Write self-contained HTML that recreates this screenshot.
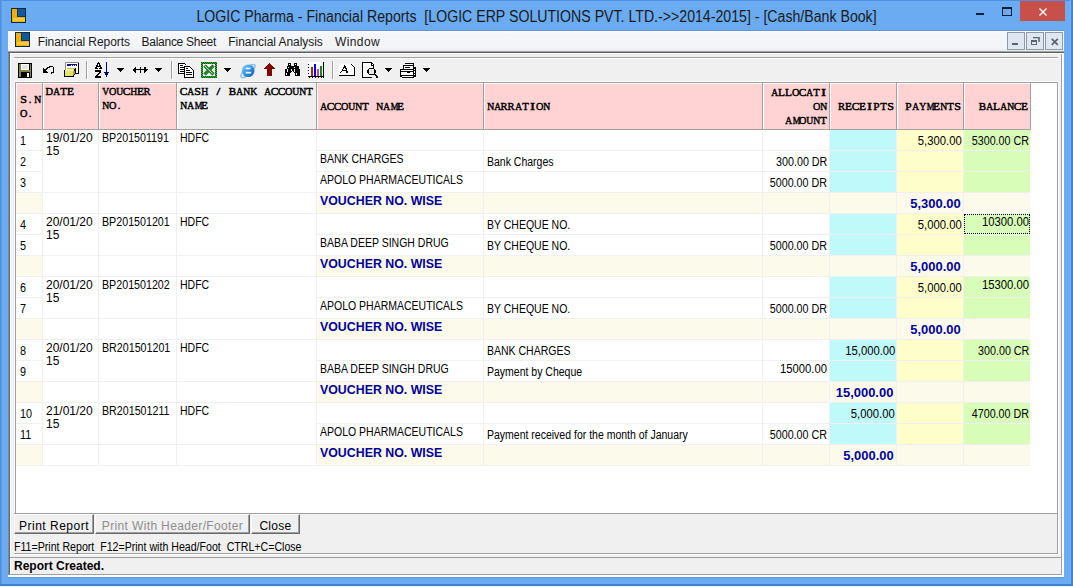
<!DOCTYPE html><html><head><meta charset="utf-8"><style>*{margin:0;padding:0;box-sizing:border-box}html,body{width:1073px;height:587px;overflow:hidden}body{position:relative;font-family:"Liberation Sans",sans-serif;color:#000;background:#6aabf2}.a{position:absolute;display:block}.t{position:absolute;white-space:pre;line-height:20px}.h{position:absolute;white-space:pre;line-height:20px;font-family:"Liberation Serif",serif;font-size:10.5px;font-weight:400;color:#000;-webkit-text-stroke:0.45px #000}.h i{font-style:normal;display:inline-block;width:7px;text-align:center}</style></head><body><div class="a" style="left:0px;top:0px;width:1073px;height:587px;background:#6aabf2"></div><div class="a" style="left:0px;top:0px;width:1073px;height:1px;background:#4d8ede"></div><div class="a" style="left:0px;top:0px;width:1px;height:587px;background:#4d8ede"></div><div class="a" style="left:1px;top:0px;width:1px;height:587px;background:#5e9be8"></div><div class="a" style="left:1070px;top:0px;width:1px;height:587px;background:#78b4f4"></div><div class="a" style="left:1071px;top:0px;width:2px;height:587px;background:#3f86d2"></div><div class="a" style="left:0px;top:584px;width:1073px;height:2px;background:#3f86d2"></div><div class="a" style="left:0px;top:586px;width:1073px;height:1px;background:#e8f2fc"></div><div class="a" style="left:8px;top:577px;width:1056px;height:1px;background:#5f95d8"></div><svg class="a" style="left:11px;top:8px" width="16" height="16" viewBox="0 0 16 16" shape-rendering="crispEdges"><rect x="0" y="0" width="15" height="15" fill="#0a2744"/><rect x="1" y="1" width="13" height="13" fill="#115a9a"/><rect x="1" y="1" width="5" height="13" fill="#efb000"/><rect x="1" y="9" width="13" height="5" fill="#efb000"/><rect x="6" y="1" width="1" height="8" fill="#0b3560"/><rect x="6" y="8" width="8" height="1" fill="#0b3560"/><rect x="2" y="10" width="12" height="3" fill="#f5c93a"/></svg><div class="t" style="left:0;width:1073px;text-align:center;top:7px;font-size:16px;color:#1a1a1a;transform:scaleX(0.884);transform-origin:center top;">LOGIC Pharma - Financial Reports  [LOGIC ERP SOLUTIONS PVT. LTD.-&gt;&gt;2014-2015] - [Cash/Bank Book]</div><div class="a" style="left:976px;top:13px;width:8px;height:2px;background:#0b1e3c"></div><div class="a" style="left:1002px;top:7px;width:10px;height:9px;border:1px solid #0b1e3c;border-top-width:2px"></div><div class="a" style="left:1020px;top:1px;width:45px;height:20px;background:#c7504b"></div><svg class="a" style="left:1039px;top:8px" width="8" height="8" viewBox="0 0 8 8" shape-rendering="crispEdges"><path d="M0.5 0.5 L7.5 7.5 M7.5 0.5 L0.5 7.5" stroke="#fff" stroke-width="1.35" shape-rendering="geometricPrecision"/></svg><div class="a" style="left:8px;top:30px;width:1056px;height:1px;background:#5f93d6"></div><div class="a" style="left:8px;top:31px;width:1056px;height:21px;background:linear-gradient(#ffffff 0px,#f5f6f9 2px,#f4f5f8 17px,#e9eaee 20px)"></div><div class="a" style="left:8px;top:51px;width:1056px;height:1px;background:#a4a4a4"></div><div class="a" style="left:8px;top:52px;width:1056px;height:1px;background:#606060"></div><svg class="a" style="left:15px;top:32px" width="16" height="16" viewBox="0 0 16 16" shape-rendering="crispEdges"><rect x="0" y="0" width="15" height="15" fill="#0a2744"/><rect x="1" y="1" width="13" height="13" fill="#115a9a"/><rect x="1" y="1" width="5" height="13" fill="#efb000"/><rect x="1" y="9" width="13" height="5" fill="#efb000"/><rect x="6" y="1" width="1" height="8" fill="#0b3560"/><rect x="6" y="8" width="8" height="1" fill="#0b3560"/><rect x="2" y="10" width="12" height="3" fill="#f5c93a"/></svg><div class="t" style="left:37.7px;top:32px;font-size:12px;color:#1a1a1a;letter-spacing:-0.07px;">Financial Reports</div><div class="t" style="left:141.6px;top:32px;font-size:12px;color:#1a1a1a;letter-spacing:-0.28px;">Balance Sheet</div><div class="t" style="left:228.3px;top:32px;font-size:12px;color:#1a1a1a;letter-spacing:-0.05px;">Financial Analysis</div><div class="t" style="left:335px;top:32px;font-size:12px;color:#1a1a1a;letter-spacing:0.4px;">Window</div><div class="a" style="left:1007px;top:32px;width:18px;height:18px;border:1px solid #8c9aa8;background:#dfe8f2"></div><div class="a" style="left:1026px;top:32px;width:18px;height:18px;border:1px solid #8c9aa8;background:#dfe8f2"></div><div class="a" style="left:1045px;top:32px;width:18px;height:18px;border:1px solid #8c9aa8;background:#dfe8f2"></div><div class="a" style="left:1012px;top:43px;width:6px;height:2px;background:#5a6570"></div><div class="a" style="left:1031px;top:40px;width:6px;height:5px;border:1px solid #5a6570;border-top-width:2px"></div><svg class="a" style="left:1033px;top:37px" width="7" height="6" viewBox="0 0 7 6" shape-rendering="crispEdges"><path d="M0 0.5 H6 V5" stroke="#5a6570" stroke-width="1.5" fill="none" shape-rendering="geometricPrecision"/></svg><svg class="a" style="left:1051px;top:38px" width="8" height="8" viewBox="0 0 8 8" shape-rendering="crispEdges"><path d="M0.8 0.8 L6.8 6.8 M6.8 0.8 L0.8 6.8" stroke="#5a6570" stroke-width="1.8" shape-rendering="geometricPrecision"/></svg><div class="a" style="left:8px;top:53px;width:1056px;height:524px;background:#f0f0f0"></div><div class="a" style="left:8px;top:53px;width:1056px;height:1px;background:#ffffff"></div><div class="a" style="left:8px;top:53px;width:1px;height:524px;background:#7a8aa0"></div><div class="a" style="left:9px;top:53px;width:1px;height:522px;background:#696969"></div><div class="a" style="left:10px;top:54px;width:1px;height:521px;background:#ffffff"></div><div class="a" style="left:1061px;top:54px;width:1px;height:521px;background:#a0a0a0"></div><div class="a" style="left:1062px;top:53px;width:2px;height:524px;background:#ffffff"></div><div class="a" style="left:8px;top:575px;width:1056px;height:2px;background:#ffffff"></div><div class="a" style="left:14px;top:57px;width:1044px;height:1px;background:#a0a0a0"></div><div class="a" style="left:14px;top:58px;width:1044px;height:1px;background:#ffffff"></div><div class="a" style="left:14px;top:81px;width:1045px;height:474px;background:#ffffff"></div><div class="a" style="left:15px;top:82px;width:1043px;height:472px;background:#a0a0a0"></div><div class="a" style="left:16px;top:83px;width:1041px;height:430px;background:#ffffff"></div><div class="a" style="left:16px;top:514px;width:1041px;height:39px;background:#f0f0f0"></div><div class="a" style="left:14px;top:513px;width:1043px;height:1px;background:#a0a0a0"></div><div class="a" style="left:15px;top:514px;width:1px;height:39px;background:#f0f0f0"></div><div class="a" style="left:14px;top:553px;width:1044px;height:1px;background:#a0a0a0"></div><div class="a" style="left:16px;top:83px;width:26px;height:46px;background:#ffffff"></div><div class="a" style="left:17px;top:84px;width:25px;height:45px;background:#ffd3d3"></div><div class="a" style="left:42px;top:83px;width:1px;height:47px;background:#a0a0a0"></div><div class="a" style="left:43px;top:83px;width:55px;height:46px;background:#ffffff"></div><div class="a" style="left:44px;top:84px;width:54px;height:45px;background:#ffd3d3"></div><div class="a" style="left:98px;top:83px;width:1px;height:47px;background:#a0a0a0"></div><div class="a" style="left:99px;top:83px;width:77px;height:46px;background:#ffffff"></div><div class="a" style="left:100px;top:84px;width:76px;height:45px;background:#ffd3d3"></div><div class="a" style="left:176px;top:83px;width:1px;height:47px;background:#a0a0a0"></div><div class="a" style="left:177px;top:83px;width:139px;height:46px;background:#ffffff"></div><div class="a" style="left:178px;top:84px;width:138px;height:45px;background:#efefef"></div><div class="a" style="left:316px;top:83px;width:1px;height:47px;background:#a0a0a0"></div><div class="a" style="left:317px;top:83px;width:166px;height:46px;background:#ffffff"></div><div class="a" style="left:318px;top:84px;width:165px;height:45px;background:#ffd3d3"></div><div class="a" style="left:483px;top:83px;width:1px;height:47px;background:#a0a0a0"></div><div class="a" style="left:484px;top:83px;width:278px;height:46px;background:#ffffff"></div><div class="a" style="left:485px;top:84px;width:277px;height:45px;background:#ffd3d3"></div><div class="a" style="left:762px;top:83px;width:1px;height:47px;background:#a0a0a0"></div><div class="a" style="left:763px;top:83px;width:66px;height:46px;background:#ffffff"></div><div class="a" style="left:764px;top:84px;width:65px;height:45px;background:#ffd3d3"></div><div class="a" style="left:829px;top:83px;width:1px;height:47px;background:#a0a0a0"></div><div class="a" style="left:830px;top:83px;width:66px;height:46px;background:#ffffff"></div><div class="a" style="left:831px;top:84px;width:65px;height:45px;background:#ffd3d3"></div><div class="a" style="left:896px;top:83px;width:1px;height:47px;background:#a0a0a0"></div><div class="a" style="left:897px;top:83px;width:66px;height:46px;background:#ffffff"></div><div class="a" style="left:898px;top:84px;width:65px;height:45px;background:#ffd3d3"></div><div class="a" style="left:963px;top:83px;width:1px;height:47px;background:#a0a0a0"></div><div class="a" style="left:964px;top:83px;width:66px;height:46px;background:#ffffff"></div><div class="a" style="left:965px;top:84px;width:65px;height:45px;background:#ffd3d3"></div><div class="a" style="left:1030px;top:83px;width:1px;height:47px;background:#a0a0a0"></div><div class="a" style="left:15px;top:129px;width:1016px;height:1px;background:#a0a0a0"></div><div class="h" style="left:19.5px;top:90px"><i style="transform:scaleX(1.15)">S</i><i style="transform:scaleX(1.0)">.</i><i style="transform:scaleX(0.92)">N</i></div><div class="h" style="left:19.5px;top:104px"><i style="transform:scaleX(0.98)">O</i><i style="transform:scaleX(1.0)">.</i></div><div class="h" style="left:45.5px;top:82px"><i style="transform:scaleX(1.0)">D</i><i style="transform:scaleX(0.9)">A</i><i style="transform:scaleX(1.02)">T</i><i style="transform:scaleX(1.08)">E</i></div><div class="h" style="left:101.5px;top:82px"><i style="transform:scaleX(0.9)">V</i><i style="transform:scaleX(0.98)">O</i><i style="transform:scaleX(0.92)">U</i><i style="transform:scaleX(1.08)">C</i><i style="transform:scaleX(0.92)">H</i><i style="transform:scaleX(1.08)">E</i><i style="transform:scaleX(1.0)">R</i></div><div class="h" style="left:101.5px;top:96px"><i style="transform:scaleX(0.92)">N</i><i style="transform:scaleX(0.98)">O</i><i style="transform:scaleX(1.0)">.</i></div><div class="h" style="left:179.5px;top:82px"><i style="transform:scaleX(1.08)">C</i><i style="transform:scaleX(0.9)">A</i><i style="transform:scaleX(1.15)">S</i><i style="transform:scaleX(0.92)">H</i><i style="transform:scaleX(1.0)"> </i><i style="transform:scaleX(1.3)">/</i><i style="transform:scaleX(1.0)"> </i><i style="transform:scaleX(1.05)">B</i><i style="transform:scaleX(0.9)">A</i><i style="transform:scaleX(0.92)">N</i><i style="transform:scaleX(0.92)">K</i><i style="transform:scaleX(1.0)"> </i><i style="transform:scaleX(0.9)">A</i><i style="transform:scaleX(1.08)">C</i><i style="transform:scaleX(1.08)">C</i><i style="transform:scaleX(0.98)">O</i><i style="transform:scaleX(0.92)">U</i><i style="transform:scaleX(0.92)">N</i><i style="transform:scaleX(1.02)">T</i></div><div class="h" style="left:179.5px;top:96px"><i style="transform:scaleX(0.92)">N</i><i style="transform:scaleX(0.9)">A</i><i style="transform:scaleX(0.82)">M</i><i style="transform:scaleX(1.08)">E</i></div><div class="h" style="left:319.5px;top:97px"><i style="transform:scaleX(0.9)">A</i><i style="transform:scaleX(1.08)">C</i><i style="transform:scaleX(1.08)">C</i><i style="transform:scaleX(0.98)">O</i><i style="transform:scaleX(0.92)">U</i><i style="transform:scaleX(0.92)">N</i><i style="transform:scaleX(1.02)">T</i><i style="transform:scaleX(1.0)"> </i><i style="transform:scaleX(0.92)">N</i><i style="transform:scaleX(0.9)">A</i><i style="transform:scaleX(0.82)">M</i><i style="transform:scaleX(1.08)">E</i></div><div class="h" style="left:486.5px;top:97px"><i style="transform:scaleX(0.92)">N</i><i style="transform:scaleX(0.9)">A</i><i style="transform:scaleX(1.0)">R</i><i style="transform:scaleX(1.0)">R</i><i style="transform:scaleX(0.9)">A</i><i style="transform:scaleX(1.02)">T</i><i style="transform:scaleX(1.45)">I</i><i style="transform:scaleX(0.98)">O</i><i style="transform:scaleX(0.92)">N</i></div><div class="h" style="left:771px;top:83px"><i style="transform:scaleX(0.9)">A</i><i style="transform:scaleX(1.08)">L</i><i style="transform:scaleX(1.08)">L</i><i style="transform:scaleX(0.98)">O</i><i style="transform:scaleX(1.08)">C</i><i style="transform:scaleX(0.9)">A</i><i style="transform:scaleX(1.02)">T</i><i style="transform:scaleX(1.45)">I</i></div><div class="h" style="left:813px;top:97px"><i style="transform:scaleX(0.98)">O</i><i style="transform:scaleX(0.92)">N</i></div><div class="h" style="left:785px;top:111px"><i style="transform:scaleX(0.9)">A</i><i style="transform:scaleX(0.82)">M</i><i style="transform:scaleX(0.98)">O</i><i style="transform:scaleX(0.92)">U</i><i style="transform:scaleX(0.92)">N</i><i style="transform:scaleX(1.02)">T</i></div><div class="h" style="left:838px;top:97px"><i style="transform:scaleX(1.0)">R</i><i style="transform:scaleX(1.08)">E</i><i style="transform:scaleX(1.08)">C</i><i style="transform:scaleX(1.08)">E</i><i style="transform:scaleX(1.45)">I</i><i style="transform:scaleX(1.08)">P</i><i style="transform:scaleX(1.02)">T</i><i style="transform:scaleX(1.15)">S</i></div><div class="h" style="left:905px;top:97px"><i style="transform:scaleX(1.08)">P</i><i style="transform:scaleX(0.9)">A</i><i style="transform:scaleX(0.92)">Y</i><i style="transform:scaleX(0.82)">M</i><i style="transform:scaleX(1.08)">E</i><i style="transform:scaleX(0.92)">N</i><i style="transform:scaleX(1.02)">T</i><i style="transform:scaleX(1.15)">S</i></div><div class="h" style="left:979px;top:97px"><i style="transform:scaleX(1.05)">B</i><i style="transform:scaleX(0.9)">A</i><i style="transform:scaleX(1.08)">L</i><i style="transform:scaleX(0.9)">A</i><i style="transform:scaleX(0.92)">N</i><i style="transform:scaleX(1.08)">C</i><i style="transform:scaleX(1.08)">E</i></div><div class="a" style="left:830px;top:130px;width:66px;height:20px;background:#bff9f9"></div><div class="a" style="left:897px;top:130px;width:66px;height:20px;background:#fefecb"></div><div class="a" style="left:964px;top:130px;width:66px;height:20px;background:#d8fdb8"></div><div class="a" style="left:830px;top:151px;width:66px;height:20px;background:#bff9f9"></div><div class="a" style="left:897px;top:151px;width:66px;height:20px;background:#fefecb"></div><div class="a" style="left:964px;top:151px;width:66px;height:20px;background:#d8fdb8"></div><div class="a" style="left:830px;top:172px;width:66px;height:20px;background:#bff9f9"></div><div class="a" style="left:897px;top:172px;width:66px;height:20px;background:#fefecb"></div><div class="a" style="left:964px;top:172px;width:66px;height:20px;background:#d8fdb8"></div><div class="a" style="left:16px;top:193px;width:26px;height:20px;background:#fcfbeb"></div><div class="a" style="left:317px;top:193px;width:713px;height:20px;background:#fcfbeb"></div><div class="a" style="left:830px;top:214px;width:66px;height:20px;background:#bff9f9"></div><div class="a" style="left:897px;top:214px;width:66px;height:20px;background:#fefecb"></div><div class="a" style="left:964px;top:214px;width:66px;height:20px;background:#d8fdb8"></div><div class="a" style="left:830px;top:235px;width:66px;height:20px;background:#bff9f9"></div><div class="a" style="left:897px;top:235px;width:66px;height:20px;background:#fefecb"></div><div class="a" style="left:964px;top:235px;width:66px;height:20px;background:#d8fdb8"></div><div class="a" style="left:16px;top:256px;width:26px;height:20px;background:#fcfbeb"></div><div class="a" style="left:317px;top:256px;width:713px;height:20px;background:#fcfbeb"></div><div class="a" style="left:830px;top:277px;width:66px;height:20px;background:#bff9f9"></div><div class="a" style="left:897px;top:277px;width:66px;height:20px;background:#fefecb"></div><div class="a" style="left:964px;top:277px;width:66px;height:20px;background:#d8fdb8"></div><div class="a" style="left:830px;top:298px;width:66px;height:20px;background:#bff9f9"></div><div class="a" style="left:897px;top:298px;width:66px;height:20px;background:#fefecb"></div><div class="a" style="left:964px;top:298px;width:66px;height:20px;background:#d8fdb8"></div><div class="a" style="left:16px;top:319px;width:26px;height:20px;background:#fcfbeb"></div><div class="a" style="left:317px;top:319px;width:713px;height:20px;background:#fcfbeb"></div><div class="a" style="left:830px;top:340px;width:66px;height:20px;background:#bff9f9"></div><div class="a" style="left:897px;top:340px;width:66px;height:20px;background:#fefecb"></div><div class="a" style="left:964px;top:340px;width:66px;height:20px;background:#d8fdb8"></div><div class="a" style="left:830px;top:361px;width:66px;height:20px;background:#bff9f9"></div><div class="a" style="left:897px;top:361px;width:66px;height:20px;background:#fefecb"></div><div class="a" style="left:964px;top:361px;width:66px;height:20px;background:#d8fdb8"></div><div class="a" style="left:16px;top:382px;width:26px;height:20px;background:#fcfbeb"></div><div class="a" style="left:317px;top:382px;width:713px;height:20px;background:#fcfbeb"></div><div class="a" style="left:830px;top:403px;width:66px;height:20px;background:#bff9f9"></div><div class="a" style="left:897px;top:403px;width:66px;height:20px;background:#fefecb"></div><div class="a" style="left:964px;top:403px;width:66px;height:20px;background:#d8fdb8"></div><div class="a" style="left:830px;top:424px;width:66px;height:20px;background:#bff9f9"></div><div class="a" style="left:897px;top:424px;width:66px;height:20px;background:#fefecb"></div><div class="a" style="left:964px;top:424px;width:66px;height:20px;background:#d8fdb8"></div><div class="a" style="left:16px;top:445px;width:26px;height:20px;background:#fcfbeb"></div><div class="a" style="left:317px;top:445px;width:713px;height:20px;background:#fcfbeb"></div><div class="a" style="left:16px;top:150px;width:26px;height:1px;background:#f0f0f0"></div><div class="a" style="left:317px;top:150px;width:513px;height:1px;background:#f0f0f0"></div><div class="a" style="left:830px;top:150px;width:200px;height:1px;background:#f0f0f0"></div><div class="a" style="left:16px;top:171px;width:26px;height:1px;background:#f0f0f0"></div><div class="a" style="left:317px;top:171px;width:513px;height:1px;background:#f0f0f0"></div><div class="a" style="left:830px;top:171px;width:200px;height:1px;background:#f0f0f0"></div><div class="a" style="left:16px;top:192px;width:26px;height:1px;background:#f0f0f0"></div><div class="a" style="left:317px;top:192px;width:513px;height:1px;background:#f0f0f0"></div><div class="a" style="left:830px;top:192px;width:200px;height:1px;background:#f0f0f0"></div><div class="a" style="left:16px;top:213px;width:26px;height:1px;background:#f0f0f0"></div><div class="a" style="left:317px;top:213px;width:513px;height:1px;background:#f0f0f0"></div><div class="a" style="left:830px;top:213px;width:200px;height:1px;background:#f0f0f0"></div><div class="a" style="left:16px;top:234px;width:26px;height:1px;background:#f0f0f0"></div><div class="a" style="left:317px;top:234px;width:513px;height:1px;background:#f0f0f0"></div><div class="a" style="left:830px;top:234px;width:200px;height:1px;background:#f0f0f0"></div><div class="a" style="left:16px;top:255px;width:26px;height:1px;background:#f0f0f0"></div><div class="a" style="left:317px;top:255px;width:513px;height:1px;background:#f0f0f0"></div><div class="a" style="left:830px;top:255px;width:200px;height:1px;background:#f0f0f0"></div><div class="a" style="left:16px;top:276px;width:26px;height:1px;background:#f0f0f0"></div><div class="a" style="left:317px;top:276px;width:513px;height:1px;background:#f0f0f0"></div><div class="a" style="left:830px;top:276px;width:200px;height:1px;background:#f0f0f0"></div><div class="a" style="left:16px;top:297px;width:26px;height:1px;background:#f0f0f0"></div><div class="a" style="left:317px;top:297px;width:513px;height:1px;background:#f0f0f0"></div><div class="a" style="left:830px;top:297px;width:200px;height:1px;background:#f0f0f0"></div><div class="a" style="left:16px;top:318px;width:26px;height:1px;background:#f0f0f0"></div><div class="a" style="left:317px;top:318px;width:513px;height:1px;background:#f0f0f0"></div><div class="a" style="left:830px;top:318px;width:200px;height:1px;background:#f0f0f0"></div><div class="a" style="left:16px;top:339px;width:26px;height:1px;background:#f0f0f0"></div><div class="a" style="left:317px;top:339px;width:513px;height:1px;background:#f0f0f0"></div><div class="a" style="left:830px;top:339px;width:200px;height:1px;background:#f0f0f0"></div><div class="a" style="left:16px;top:360px;width:26px;height:1px;background:#f0f0f0"></div><div class="a" style="left:317px;top:360px;width:513px;height:1px;background:#f0f0f0"></div><div class="a" style="left:830px;top:360px;width:200px;height:1px;background:#f0f0f0"></div><div class="a" style="left:16px;top:381px;width:26px;height:1px;background:#f0f0f0"></div><div class="a" style="left:317px;top:381px;width:513px;height:1px;background:#f0f0f0"></div><div class="a" style="left:830px;top:381px;width:200px;height:1px;background:#f0f0f0"></div><div class="a" style="left:16px;top:402px;width:26px;height:1px;background:#f0f0f0"></div><div class="a" style="left:317px;top:402px;width:513px;height:1px;background:#f0f0f0"></div><div class="a" style="left:830px;top:402px;width:200px;height:1px;background:#f0f0f0"></div><div class="a" style="left:16px;top:423px;width:26px;height:1px;background:#f0f0f0"></div><div class="a" style="left:317px;top:423px;width:513px;height:1px;background:#f0f0f0"></div><div class="a" style="left:830px;top:423px;width:200px;height:1px;background:#f0f0f0"></div><div class="a" style="left:16px;top:444px;width:26px;height:1px;background:#f0f0f0"></div><div class="a" style="left:317px;top:444px;width:513px;height:1px;background:#f0f0f0"></div><div class="a" style="left:830px;top:444px;width:200px;height:1px;background:#f0f0f0"></div><div class="a" style="left:16px;top:465px;width:26px;height:1px;background:#f0f0f0"></div><div class="a" style="left:317px;top:465px;width:513px;height:1px;background:#f0f0f0"></div><div class="a" style="left:830px;top:465px;width:200px;height:1px;background:#f0f0f0"></div><div class="a" style="left:43px;top:192px;width:273px;height:1px;background:#f0f0f0"></div><div class="a" style="left:43px;top:213px;width:273px;height:1px;background:#f0f0f0"></div><div class="a" style="left:830px;top:213px;width:66px;height:1px;background:#f0f0f0"></div><div class="a" style="left:43px;top:255px;width:273px;height:1px;background:#f0f0f0"></div><div class="a" style="left:43px;top:276px;width:273px;height:1px;background:#f0f0f0"></div><div class="a" style="left:830px;top:276px;width:66px;height:1px;background:#f0f0f0"></div><div class="a" style="left:43px;top:318px;width:273px;height:1px;background:#f0f0f0"></div><div class="a" style="left:43px;top:339px;width:273px;height:1px;background:#f0f0f0"></div><div class="a" style="left:830px;top:339px;width:66px;height:1px;background:#f0f0f0"></div><div class="a" style="left:43px;top:381px;width:273px;height:1px;background:#f0f0f0"></div><div class="a" style="left:43px;top:402px;width:273px;height:1px;background:#f0f0f0"></div><div class="a" style="left:830px;top:402px;width:66px;height:1px;background:#f0f0f0"></div><div class="a" style="left:43px;top:444px;width:273px;height:1px;background:#f0f0f0"></div><div class="a" style="left:43px;top:465px;width:273px;height:1px;background:#f0f0f0"></div><div class="a" style="left:830px;top:465px;width:66px;height:1px;background:#f0f0f0"></div><div class="a" style="left:42px;top:130px;width:1px;height:336px;background:#f0f0f0"></div><div class="a" style="left:98px;top:130px;width:1px;height:336px;background:#f0f0f0"></div><div class="a" style="left:176px;top:130px;width:1px;height:336px;background:#f0f0f0"></div><div class="a" style="left:316px;top:130px;width:1px;height:336px;background:#f0f0f0"></div><div class="a" style="left:483px;top:130px;width:1px;height:336px;background:#f0f0f0"></div><div class="a" style="left:762px;top:130px;width:1px;height:336px;background:#f0f0f0"></div><div class="a" style="left:829px;top:130px;width:1px;height:336px;background:#f0f0f0"></div><div class="a" style="left:896px;top:130px;width:1px;height:336px;background:#f0f0f0"></div><div class="a" style="left:963px;top:130px;width:1px;height:336px;background:#f0f0f0"></div><div class="t" style="left:19.5px;top:131px;font-size:12px;transform:scaleX(0.9);transform-origin:left top;">1</div><div class="t" style="left:19.5px;top:152px;font-size:12px;transform:scaleX(0.9);transform-origin:left top;">2</div><div class="t" style="left:19.5px;top:173px;font-size:12px;transform:scaleX(0.9);transform-origin:left top;">3</div><div class="t" style="left:19.5px;top:215px;font-size:12px;transform:scaleX(0.9);transform-origin:left top;">4</div><div class="t" style="left:19.5px;top:236px;font-size:12px;transform:scaleX(0.9);transform-origin:left top;">5</div><div class="t" style="left:19.5px;top:278px;font-size:12px;transform:scaleX(0.9);transform-origin:left top;">6</div><div class="t" style="left:19.5px;top:299px;font-size:12px;transform:scaleX(0.9);transform-origin:left top;">7</div><div class="t" style="left:19.5px;top:341px;font-size:12px;transform:scaleX(0.9);transform-origin:left top;">8</div><div class="t" style="left:19.5px;top:362px;font-size:12px;transform:scaleX(0.9);transform-origin:left top;">9</div><div class="t" style="left:19.5px;top:404px;font-size:12px;transform:scaleX(0.9);transform-origin:left top;">10</div><div class="t" style="left:19.5px;top:425px;font-size:12px;transform:scaleX(0.9);transform-origin:left top;">11</div><div class="t" style="left:46px;top:128px;font-size:12px;">19/01/20</div><div class="t" style="left:46px;top:141px;font-size:12px;">15</div><div class="t" style="left:101.7px;top:128px;font-size:12px;transform:scaleX(0.89);transform-origin:left top;">BP201501191</div><div class="t" style="left:179.8px;top:128px;font-size:12px;transform:scaleX(0.875);transform-origin:left top;">HDFC</div><div class="t" style="left:46px;top:212px;font-size:12px;">20/01/20</div><div class="t" style="left:46px;top:225px;font-size:12px;">15</div><div class="t" style="left:101.7px;top:212px;font-size:12px;transform:scaleX(0.89);transform-origin:left top;">BP201501201</div><div class="t" style="left:179.8px;top:212px;font-size:12px;transform:scaleX(0.875);transform-origin:left top;">HDFC</div><div class="t" style="left:46px;top:275px;font-size:12px;">20/01/20</div><div class="t" style="left:46px;top:288px;font-size:12px;">15</div><div class="t" style="left:101.7px;top:275px;font-size:12px;transform:scaleX(0.89);transform-origin:left top;">BP201501202</div><div class="t" style="left:179.8px;top:275px;font-size:12px;transform:scaleX(0.875);transform-origin:left top;">HDFC</div><div class="t" style="left:46px;top:338px;font-size:12px;">20/01/20</div><div class="t" style="left:46px;top:351px;font-size:12px;">15</div><div class="t" style="left:101.7px;top:338px;font-size:12px;transform:scaleX(0.89);transform-origin:left top;">BR201501201</div><div class="t" style="left:179.8px;top:338px;font-size:12px;transform:scaleX(0.875);transform-origin:left top;">HDFC</div><div class="t" style="left:46px;top:401px;font-size:12px;">21/01/20</div><div class="t" style="left:46px;top:414px;font-size:12px;">15</div><div class="t" style="left:101.7px;top:401px;font-size:12px;transform:scaleX(0.89);transform-origin:left top;">BR201501211</div><div class="t" style="left:179.8px;top:401px;font-size:12px;transform:scaleX(0.875);transform-origin:left top;">HDFC</div><div class="t" style="left:320px;top:191px;font-size:12px;font-weight:700;color:#00009c;transform:scaleX(1.03);transform-origin:left top;">VOUCHER NO. WISE</div><div class="t" style="left:320px;top:254px;font-size:12px;font-weight:700;color:#00009c;transform:scaleX(1.03);transform-origin:left top;">VOUCHER NO. WISE</div><div class="t" style="left:320px;top:317px;font-size:12px;font-weight:700;color:#00009c;transform:scaleX(1.03);transform-origin:left top;">VOUCHER NO. WISE</div><div class="t" style="left:320px;top:380px;font-size:12px;font-weight:700;color:#00009c;transform:scaleX(1.03);transform-origin:left top;">VOUCHER NO. WISE</div><div class="t" style="left:320px;top:443px;font-size:12px;font-weight:700;color:#00009c;transform:scaleX(1.03);transform-origin:left top;">VOUCHER NO. WISE</div><div class="t" style="left:320px;top:149px;font-size:12px;transform:scaleX(0.875);transform-origin:left top;">BANK CHARGES</div><div class="t" style="left:487px;top:152px;font-size:12px;transform:scaleX(0.875);transform-origin:left top;">Bank Charges</div><div class="t" style="right:246px;text-align:right;top:152px;font-size:12px;transform:scaleX(0.895);transform-origin:right top;">300.00 DR</div><div class="t" style="left:320px;top:170px;font-size:12px;transform:scaleX(0.875);transform-origin:left top;">APOLO PHARMACEUTICALS</div><div class="t" style="right:246px;text-align:right;top:173px;font-size:12px;transform:scaleX(0.895);transform-origin:right top;">5000.00 DR</div><div class="t" style="right:111px;text-align:right;top:131px;font-size:12px;transform:scaleX(0.94);transform-origin:right top;">5,300.00</div><div class="t" style="right:44px;text-align:right;top:131px;font-size:12px;transform:scaleX(0.895);transform-origin:right top;">5300.00 CR</div><div class="t" style="right:112.5px;text-align:right;top:194px;font-size:12px;font-weight:700;color:#00009c;transform:scaleX(1.08);transform-origin:right top;">5,300.00</div><div class="t" style="left:487px;top:215px;font-size:12px;transform:scaleX(0.875);transform-origin:left top;">BY CHEQUE NO.</div><div class="t" style="right:111px;text-align:right;top:215px;font-size:12px;transform:scaleX(0.94);transform-origin:right top;">5,000.00</div><div class="t" style="right:44px;text-align:right;top:212px;font-size:12px;transform:scaleX(0.94);transform-origin:right top;">10300.00</div><div class="a" style="left:964px;top:214px;width:66px;height:20px;border:1px dotted #000"></div><div class="t" style="left:320px;top:233px;font-size:12px;transform:scaleX(0.875);transform-origin:left top;">BABA DEEP SINGH DRUG</div><div class="t" style="left:487px;top:236px;font-size:12px;transform:scaleX(0.875);transform-origin:left top;">BY CHEQUE NO.</div><div class="t" style="right:246px;text-align:right;top:236px;font-size:12px;transform:scaleX(0.895);transform-origin:right top;">5000.00 DR</div><div class="t" style="right:112.5px;text-align:right;top:257px;font-size:12px;font-weight:700;color:#00009c;transform:scaleX(1.08);transform-origin:right top;">5,000.00</div><div class="t" style="right:111px;text-align:right;top:278px;font-size:12px;transform:scaleX(0.94);transform-origin:right top;">5,000.00</div><div class="t" style="right:44px;text-align:right;top:275px;font-size:12px;transform:scaleX(0.94);transform-origin:right top;">15300.00</div><div class="t" style="left:320px;top:296px;font-size:12px;transform:scaleX(0.875);transform-origin:left top;">APOLO PHARMACEUTICALS</div><div class="t" style="left:487px;top:299px;font-size:12px;transform:scaleX(0.875);transform-origin:left top;">BY CHEQUE NO.</div><div class="t" style="right:246px;text-align:right;top:299px;font-size:12px;transform:scaleX(0.895);transform-origin:right top;">5000.00 DR</div><div class="t" style="right:112.5px;text-align:right;top:320px;font-size:12px;font-weight:700;color:#00009c;transform:scaleX(1.08);transform-origin:right top;">5,000.00</div><div class="t" style="left:487px;top:341px;font-size:12px;transform:scaleX(0.875);transform-origin:left top;">BANK CHARGES</div><div class="t" style="right:178px;text-align:right;top:341px;font-size:12px;transform:scaleX(0.94);transform-origin:right top;">15,000.00</div><div class="t" style="right:44px;text-align:right;top:341px;font-size:12px;transform:scaleX(0.895);transform-origin:right top;">300.00 CR</div><div class="t" style="left:320px;top:359px;font-size:12px;transform:scaleX(0.875);transform-origin:left top;">BABA DEEP SINGH DRUG</div><div class="t" style="left:487px;top:362px;font-size:12px;transform:scaleX(0.875);transform-origin:left top;">Payment by Cheque</div><div class="t" style="right:246px;text-align:right;top:359px;font-size:12px;transform:scaleX(0.94);transform-origin:right top;">15000.00</div><div class="t" style="right:179.5px;text-align:right;top:383px;font-size:12px;font-weight:700;color:#00009c;transform:scaleX(1.08);transform-origin:right top;">15,000.00</div><div class="t" style="right:178px;text-align:right;top:404px;font-size:12px;transform:scaleX(0.94);transform-origin:right top;">5,000.00</div><div class="t" style="right:44px;text-align:right;top:404px;font-size:12px;transform:scaleX(0.895);transform-origin:right top;">4700.00 DR</div><div class="t" style="left:320px;top:422px;font-size:12px;transform:scaleX(0.875);transform-origin:left top;">APOLO PHARMACEUTICALS</div><div class="t" style="left:487px;top:425px;font-size:12px;transform:scaleX(0.875);transform-origin:left top;">Payment received for the month of January</div><div class="t" style="right:246px;text-align:right;top:425px;font-size:12px;transform:scaleX(0.895);transform-origin:right top;">5000.00 CR</div><div class="t" style="right:179.5px;text-align:right;top:446px;font-size:12px;font-weight:700;color:#00009c;transform:scaleX(1.08);transform-origin:right top;">5,000.00</div><div class="a" style="left:14px;top:514px;width:80px;height:20px;background:#f0f0f0;border-left:1px solid #fff;border-top:1px solid #fff;border-right:1px solid #696969;border-bottom:1px solid #696969"></div><div class="a" style="left:15px;top:515px;width:78px;height:18px;border-right:1px solid #a0a0a0;border-bottom:1px solid #a0a0a0"></div><div class="t" style="left:14px;width:80px;text-align:center;top:516px;font-size:12px;letter-spacing:0.5px;color:#000">Print Report</div><div class="a" style="left:95px;top:514px;width:155px;height:20px;background:#f0f0f0;border-left:1px solid #fff;border-top:1px solid #fff;border-right:1px solid #696969;border-bottom:1px solid #696969"></div><div class="a" style="left:96px;top:515px;width:153px;height:18px;border-right:1px solid #a0a0a0;border-bottom:1px solid #a0a0a0"></div><div class="t" style="left:95px;width:155px;text-align:center;top:516px;font-size:12px;letter-spacing:0.36px;color:#8e8e8e">Print With Header/Footer</div><div class="a" style="left:251px;top:514px;width:49px;height:20px;background:#f0f0f0;border-left:1px solid #fff;border-top:1px solid #fff;border-right:1px solid #696969;border-bottom:1px solid #696969"></div><div class="a" style="left:252px;top:515px;width:47px;height:18px;border-right:1px solid #a0a0a0;border-bottom:1px solid #a0a0a0"></div><div class="t" style="left:251px;width:49px;text-align:center;top:516px;font-size:12px;letter-spacing:0.3px;color:#000">Close</div><div class="t" style="left:14px;top:537px;font-size:12px;transform:scaleX(0.884);transform-origin:left top;">F11=Print Report  F12=Print with Head/Foot  CTRL+C=Close</div><div class="a" style="left:10px;top:557px;width:1052px;height:1px;background:#a0a0a0"></div><div class="a" style="left:9px;top:574px;width:1053px;height:1px;background:#a0a0a0"></div><div class="t" style="left:14px;top:556px;font-size:12px;font-weight:700;">Report Created.</div><div class="a" style="left:86px;top:61px;width:1px;height:18px;background:#a0a0a0"></div><div class="a" style="left:87px;top:61px;width:1px;height:18px;background:#ffffff"></div><div class="a" style="left:171px;top:61px;width:1px;height:18px;background:#a0a0a0"></div><div class="a" style="left:172px;top:61px;width:1px;height:18px;background:#ffffff"></div><div class="a" style="left:332px;top:61px;width:1px;height:18px;background:#a0a0a0"></div><div class="a" style="left:333px;top:61px;width:1px;height:18px;background:#ffffff"></div><svg class="a" style="left:18px;top:63px" width="14" height="15" viewBox="0 0 14 15" shape-rendering="crispEdges"><rect x="0" y="0" width="14" height="15" fill="#000"/><rect x="1" y="1" width="2" height="13" fill="#84843c"/><rect x="12" y="1" width="1" height="13" fill="#84843c"/><rect x="1" y="7" width="12" height="2" fill="#84843c"/><rect x="3" y="1" width="8" height="6" fill="#ffffff"/><rect x="4" y="2" width="6" height="4" fill="#e4e4e4"/><rect x="3" y="9" width="9" height="5" fill="#000"/><rect x="9" y="10" width="2" height="4" fill="#fff"/></svg><svg class="a" style="left:41px;top:63px" width="14" height="12" viewBox="0 0 14 12" shape-rendering="crispEdges"><rect x="8" y="3" width="4" height="1" fill="#000"/><rect x="6" y="4" width="3" height="1" fill="#000"/><rect x="12" y="4" width="1" height="5" fill="#000"/><rect x="2" y="5" width="1" height="1" fill="#000"/><rect x="5" y="5" width="2" height="1" fill="#000"/><rect x="2" y="6" width="4" height="1" fill="#000"/><rect x="2" y="7" width="3" height="1" fill="#000"/><rect x="2" y="8" width="4" height="1" fill="#000"/><rect x="2" y="9" width="5" height="1" fill="#000"/><rect x="10" y="9" width="3" height="1" fill="#000"/><rect x="10" y="10" width="1" height="1" fill="#000"/></svg><svg class="a" style="left:64px;top:62px" width="16" height="16" viewBox="0 0 16 16" shape-rendering="crispEdges"><rect x="1" y="0" width="14" height="1" fill="#8a8a8a"/><rect x="1" y="0" width="1" height="10" fill="#8a8a8a"/><rect x="14" y="1" width="1" height="11" fill="#000"/><rect x="11" y="11" width="4" height="1" fill="#000"/><rect x="2" y="1" width="12" height="10" fill="#ffffff"/><rect x="3" y="2" width="10" height="2" fill="#101080"/><rect x="7" y="3" width="1" height="1" fill="#ffffff"/><rect x="9" y="3" width="1" height="1" fill="#ffffff"/><rect x="11" y="3" width="1" height="1" fill="#ffffff"/><rect x="3" y="6" width="9" height="1" fill="#b8b860"/><rect x="2" y="7" width="9" height="1" fill="#f2f2a4"/><rect x="1" y="8" width="9" height="1" fill="#f2f2a4"/><rect x="11" y="6" width="1" height="1" fill="#000"/><rect x="10" y="7" width="2" height="1" fill="#000"/><rect x="10" y="8" width="2" height="1" fill="#000"/><rect x="1" y="9" width="8" height="5" fill="#e2e266"/><rect x="9" y="9" width="2" height="4" fill="#a4a43c"/><rect x="11" y="7" width="1" height="5" fill="#000"/><rect x="10" y="12" width="1" height="1" fill="#000"/><rect x="9" y="13" width="1" height="1" fill="#000"/><rect x="0" y="8" width="1" height="7" fill="#000"/><rect x="0" y="14" width="10" height="1" fill="#000"/></svg><svg class="a" style="left:95px;top:62px" width="15" height="16" viewBox="0 0 15 16" shape-rendering="crispEdges"><rect x="3" y="0" width="1" height="1" fill="#000"/><rect x="2" y="1" width="3" height="1" fill="#000"/><rect x="2" y="2" width="1" height="1" fill="#000"/><rect x="4" y="2" width="1" height="1" fill="#000"/><rect x="1" y="3" width="2" height="1" fill="#000"/><rect x="4" y="3" width="2" height="1" fill="#000"/><rect x="1" y="4" width="5" height="1" fill="#000"/><rect x="0" y="5" width="2" height="1" fill="#000"/><rect x="5" y="5" width="2" height="1" fill="#000"/><rect x="0" y="6" width="3" height="1" fill="#000"/><rect x="4" y="6" width="3" height="1" fill="#000"/><rect x="0" y="8" width="6" height="2" fill="#000"/><rect x="4" y="10" width="2" height="1" fill="#000"/><rect x="3" y="11" width="2" height="1" fill="#000"/><rect x="2" y="12" width="2" height="1" fill="#000"/><rect x="1" y="13" width="2" height="1" fill="#000"/><rect x="0" y="14" width="6" height="2" fill="#000"/><rect x="11" y="0" width="1" height="13" fill="#000080"/><rect x="9" y="10" width="5" height="1" fill="#000080"/><rect x="10" y="11" width="3" height="2" fill="#000080"/><rect x="11" y="13" width="1" height="2" fill="#000080"/></svg><svg class="a" style="left:117px;top:68px" width="8" height="5" viewBox="0 0 8 5" shape-rendering="crispEdges"><rect x="0" y="0" width="7" height="1" fill="#000"/><rect x="1" y="1" width="5" height="1" fill="#000"/><rect x="2" y="2" width="3" height="1" fill="#000"/><rect x="3" y="3" width="1" height="1" fill="#000"/></svg><svg class="a" style="left:155px;top:68px" width="8" height="5" viewBox="0 0 8 5" shape-rendering="crispEdges"><rect x="0" y="0" width="7" height="1" fill="#000"/><rect x="1" y="1" width="5" height="1" fill="#000"/><rect x="2" y="2" width="3" height="1" fill="#000"/><rect x="3" y="3" width="1" height="1" fill="#000"/></svg><svg class="a" style="left:224px;top:68px" width="8" height="5" viewBox="0 0 8 5" shape-rendering="crispEdges"><rect x="0" y="0" width="7" height="1" fill="#000"/><rect x="1" y="1" width="5" height="1" fill="#000"/><rect x="2" y="2" width="3" height="1" fill="#000"/><rect x="3" y="3" width="1" height="1" fill="#000"/></svg><svg class="a" style="left:385px;top:68px" width="8" height="5" viewBox="0 0 8 5" shape-rendering="crispEdges"><rect x="0" y="0" width="7" height="1" fill="#000"/><rect x="1" y="1" width="5" height="1" fill="#000"/><rect x="2" y="2" width="3" height="1" fill="#000"/><rect x="3" y="3" width="1" height="1" fill="#000"/></svg><svg class="a" style="left:423px;top:68px" width="8" height="5" viewBox="0 0 8 5" shape-rendering="crispEdges"><rect x="0" y="0" width="7" height="1" fill="#000"/><rect x="1" y="1" width="5" height="1" fill="#000"/><rect x="2" y="2" width="3" height="1" fill="#000"/><rect x="3" y="3" width="1" height="1" fill="#000"/></svg><svg class="a" style="left:133px;top:67px" width="15" height="6" viewBox="0 0 15 6" shape-rendering="crispEdges"><rect x="0" y="2" width="15" height="1" fill="#000"/><rect x="0" y="2" width="1" height="2" fill="#000"/><rect x="1" y="1" width="1" height="4" fill="#000"/><rect x="2" y="0" width="1" height="6" fill="#000"/><rect x="7" y="0" width="1" height="6" fill="#000"/><rect x="11" y="0" width="1" height="6" fill="#000"/><rect x="12" y="0" width="1" height="5" fill="#000"/><rect x="13" y="2" width="1" height="2" fill="#000"/><rect x="14" y="2" width="1" height="1" fill="#000"/></svg><svg class="a" style="left:178px;top:63px" width="16" height="15" viewBox="0 0 16 15" shape-rendering="crispEdges"><rect x="0" y="0" width="7" height="1" fill="#000"/><rect x="0" y="0" width="1" height="11" fill="#000"/><rect x="0" y="10" width="6" height="1" fill="#000"/><rect x="7" y="1" width="1" height="1" fill="#000"/><rect x="1" y="1" width="6" height="9" fill="#fff"/><rect x="2" y="2" width="3" height="1" fill="#000"/><rect x="2" y="4" width="4" height="1" fill="#000"/><rect x="2" y="6" width="4" height="1" fill="#000"/><rect x="2" y="8" width="4" height="1" fill="#000"/><rect x="6" y="3" width="6" height="1" fill="#000"/><rect x="12" y="4" width="1" height="1" fill="#000"/><rect x="13" y="5" width="1" height="1" fill="#000"/><rect x="14" y="6" width="1" height="1" fill="#000"/><rect x="15" y="7" width="1" height="8" fill="#000"/><rect x="6" y="3" width="1" height="12" fill="#000"/><rect x="6" y="14" width="10" height="1" fill="#000"/><rect x="7" y="4" width="5" height="10" fill="#fff"/><rect x="12" y="5" width="1" height="9" fill="#fff"/><rect x="13" y="6" width="1" height="8" fill="#fff"/><rect x="14" y="7" width="1" height="7" fill="#fff"/><rect x="8" y="5" width="2" height="1" fill="#000"/><rect x="8" y="7" width="4" height="1" fill="#000"/><rect x="8" y="9" width="6" height="1" fill="#000"/><rect x="8" y="11" width="6" height="1" fill="#000"/></svg><svg class="a" style="left:201px;top:62px" width="16" height="16" viewBox="0 0 16 16" shape-rendering="crispEdges"><defs><pattern id="dg" width="2" height="2" patternUnits="userSpaceOnUse"><rect width="2" height="2" fill="#3f9f46"/><rect width="1" height="1" fill="#005a00"/><rect x="1" y="1" width="1" height="1" fill="#005a00"/></pattern></defs><rect x="0" y="0" width="16" height="16" fill="url(#dg)"/><rect x="2" y="2" width="12" height="12" fill="#fff"/><path d="M3.5 3.5 L12.5 12.5 M12.5 3.5 L3.5 12.5" stroke="#2a7f32" stroke-width="3.6" shape-rendering="geometricPrecision"/><path d="M4 4 L11.5 11.5" stroke="#e8f8e8" stroke-width="0.8" shape-rendering="geometricPrecision"/></svg><svg class="a" style="left:239px;top:62px" width="18" height="17" viewBox="0 0 18 17" shape-rendering="crispEdges"><defs><linearGradient id="ieg" x1="0" y1="0" x2="1" y2="1"><stop offset="0" stop-color="#8fd2fb"/><stop offset="0.45" stop-color="#3a9ae6"/><stop offset="1" stop-color="#174f98"/></linearGradient></defs><g shape-rendering="geometricPrecision"><ellipse cx="9" cy="9" rx="9" ry="3.4" transform="rotate(-42 9 9)" fill="none" stroke="#7fc0ee" stroke-width="1.4"/><circle cx="9.2" cy="8.8" r="6.3" fill="url(#ieg)"/><rect x="6.8" y="5.6" width="4.6" height="1.7" fill="#eef8ff"/><rect x="6.8" y="9.8" width="5.4" height="1.7" fill="#eef8ff"/></g></svg><svg class="a" style="left:264px;top:63px" width="12" height="14" viewBox="0 0 12 14" shape-rendering="crispEdges"><rect x="5" y="0" width="1" height="1" fill="#800000"/><rect x="4" y="1" width="3" height="1" fill="#800000"/><rect x="3" y="2" width="5" height="1" fill="#800000"/><rect x="2" y="3" width="7" height="1" fill="#800000"/><rect x="1" y="4" width="9" height="1" fill="#800000"/><rect x="0" y="5" width="11" height="1" fill="#800000"/><rect x="3" y="6" width="5" height="7" fill="#800000"/></svg><svg class="a" style="left:285px;top:63px" width="16" height="14" viewBox="0 0 16 14" shape-rendering="crispEdges"><rect x="3" y="0" width="3" height="3" fill="#000"/><rect x="9" y="0" width="3" height="3" fill="#000"/><rect x="2" y="3" width="12" height="3" fill="#000"/><rect x="0" y="6" width="15" height="7" fill="#000"/><rect x="4" y="1" width="1" height="1" fill="#f0f0f0"/><rect x="10" y="1" width="1" height="1" fill="#f0f0f0"/><rect x="3" y="4" width="1" height="1" fill="#f0f0f0"/><rect x="9" y="4" width="1" height="1" fill="#f0f0f0"/><rect x="2" y="6" width="1" height="3" fill="#f0f0f0"/><rect x="6" y="6" width="1" height="2" fill="#f0f0f0"/><rect x="9" y="6" width="1" height="3" fill="#f0f0f0"/><rect x="1" y="10" width="1" height="2" fill="#f0f0f0"/><rect x="11" y="10" width="1" height="2" fill="#f0f0f0"/><rect x="5" y="10" width="5" height="3" fill="#f0f0f0"/><rect x="6" y="9" width="3" height="1" fill="#f0f0f0"/><rect x="7" y="8" width="1" height="1" fill="#f0f0f0"/></svg><svg class="a" style="left:308px;top:62px" width="17" height="17" viewBox="0 0 17 17" shape-rendering="crispEdges"><rect x="0" y="0" width="16" height="15" fill="#fff"/><rect x="0" y="2" width="1" height="1" fill="#000"/><rect x="0" y="5" width="1" height="1" fill="#000"/><rect x="0" y="8" width="1" height="1" fill="#000"/><rect x="0" y="11" width="1" height="1" fill="#000"/><rect x="3" y="5" width="2" height="10" fill="#b02222"/><rect x="6" y="2" width="2" height="13" fill="#0000e0"/><rect x="9" y="7" width="2" height="8" fill="#c040c0"/><rect x="12" y="4" width="2" height="11" fill="#108a10"/><rect x="15" y="0" width="1" height="16" fill="#000"/><rect x="0" y="14" width="16" height="1" fill="#000"/><rect x="1" y="15" width="1" height="1" fill="#000"/><rect x="4" y="15" width="1" height="1" fill="#000"/><rect x="7" y="15" width="1" height="1" fill="#000"/><rect x="10" y="15" width="1" height="1" fill="#000"/><rect x="13" y="15" width="1" height="1" fill="#000"/></svg><svg class="a" style="left:339px;top:63px" width="17" height="14" viewBox="0 0 17 14" shape-rendering="crispEdges"><rect x="0" y="1" width="15" height="12" fill="#fff"/><rect x="0" y="12" width="16" height="1" fill="#000"/><rect x="15" y="4" width="1" height="9" fill="#000"/><rect x="12" y="1" width="1" height="1" fill="#000"/><rect x="13" y="2" width="1" height="1" fill="#000"/><rect x="14" y="3" width="1" height="1" fill="#000"/><rect x="5" y="2" width="1" height="1" fill="#000"/><rect x="5" y="3" width="2" height="1" fill="#000"/><rect x="4" y="4" width="3" height="1" fill="#000"/><rect x="4" y="5" width="1" height="1" fill="#000"/><rect x="6" y="5" width="2" height="1" fill="#000"/><rect x="3" y="6" width="1" height="1" fill="#000"/><rect x="7" y="6" width="1" height="1" fill="#000"/><rect x="3" y="7" width="5" height="1" fill="#000"/><rect x="2" y="8" width="1" height="1" fill="#000"/><rect x="7" y="8" width="2" height="1" fill="#000"/><rect x="1" y="9" width="1" height="1" fill="#000"/><rect x="7" y="9" width="2" height="1" fill="#000"/></svg><svg class="a" style="left:362px;top:62px" width="17" height="17" viewBox="0 0 17 17" shape-rendering="crispEdges"><rect x="0" y="0" width="10" height="16" fill="#000"/><rect x="10" y="1" width="1" height="1" fill="#000"/><rect x="11" y="2" width="1" height="1" fill="#000"/><rect x="1" y="1" width="9" height="14" fill="#fff"/><rect x="9" y="1" width="1" height="3" fill="#000"/><rect x="10" y="3" width="2" height="1" fill="#000"/><rect x="11" y="4" width="1" height="3" fill="#000"/><rect x="7" y="6" width="5" height="1" fill="#000"/><rect x="6" y="7" width="1" height="5" fill="#000"/><rect x="12" y="7" width="1" height="5" fill="#000"/><rect x="7" y="12" width="5" height="1" fill="#000"/><rect x="5" y="8" width="1" height="3" fill="#000"/><rect x="13" y="8" width="1" height="3" fill="#000"/><rect x="7" y="7" width="5" height="5" fill="#e8e8e8"/><rect x="12" y="12" width="2" height="1" fill="#000"/><rect x="13" y="13" width="2" height="1" fill="#000"/><rect x="14" y="14" width="2" height="2" fill="#000"/></svg><svg class="a" style="left:400px;top:63px" width="17" height="16" viewBox="0 0 17 16" shape-rendering="crispEdges"><rect x="5" y="0" width="9" height="1" fill="#000"/><rect x="13" y="0" width="1" height="4" fill="#000"/><rect x="4" y="2" width="9" height="1" fill="#000"/><rect x="3" y="2" width="1" height="5" fill="#000"/><rect x="5" y="4" width="5" height="1" fill="#000"/><rect x="0" y="6" width="16" height="1" fill="#000"/><rect x="0" y="6" width="1" height="8" fill="#000"/><rect x="0" y="8" width="14" height="1" fill="#000"/><rect x="7" y="9" width="3" height="1" fill="#000"/><rect x="0" y="12" width="15" height="1" fill="#000"/><rect x="2" y="14" width="12" height="1" fill="#000"/><rect x="1" y="13" width="1" height="1" fill="#000"/><rect x="13" y="4" width="3" height="10" fill="#000"/><rect x="6" y="1" width="7" height="1" fill="#fff"/><rect x="4" y="3" width="8" height="1" fill="#fff"/><rect x="4" y="5" width="8" height="1" fill="#fff"/><rect x="2" y="7" width="11" height="1" fill="#fff"/><rect x="1" y="9" width="6" height="3" fill="#fff"/><rect x="10" y="9" width="3" height="3" fill="#fff"/><rect x="7" y="10" width="3" height="2" fill="#fff"/><rect x="2" y="13" width="11" height="1" fill="#fff"/><rect x="14" y="6" width="1" height="1" fill="#fff"/><rect x="14" y="8" width="1" height="2" fill="#fff"/><rect x="14" y="11" width="1" height="1" fill="#fff"/></svg></body></html>
